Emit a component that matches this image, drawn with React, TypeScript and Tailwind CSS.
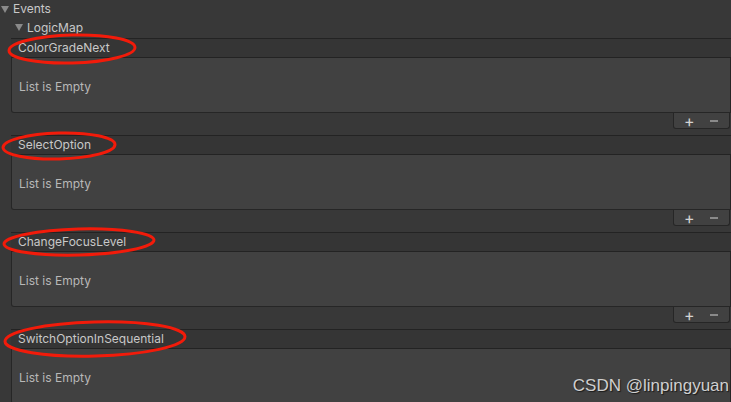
import React from 'react';

const EVENTS = ['ColorGradeNext', 'SelectOption', 'ChangeFocusLevel', 'SwitchOptionInSequential'];

// red marker ellipses drawn on top of the inspector
const MARKS = [
  { cx: 72, cy: 49, rx: 63, ry: 14 },
  { cx: 59, cy: 146, rx: 56, ry: 13 },
  { cx: 79, cy: 242, rx: 75, ry: 13 },
  { cx: 95, cy: 339, rx: 90, ry: 17 },
];

function Caret() {
  return (
    <svg width="8" height="7" viewBox="0 0 8 7" className="shrink-0">
      <path d="M0 0h8L4 7z" fill="#8a8a8a" />
    </svg>
  );
}

function EventList({ name, last }: { name: string; last: boolean }) {
  return (
    <div className="mb-[6px]">
      <div className="flex h-[20px] items-center border-y border-[#232323] bg-[#353535] pl-[7px] text-[12px] text-[#c8c8c8]">
        {name}
      </div>
      <div className="flex h-[55px] items-center rounded-bl-[3px] border-x border-b border-[#262626] bg-[#414141] pl-[7px] pt-[3px] text-[12px] text-[#b8b8b8]">
        List is Empty
      </div>
      {!last && (
        <div className="flex justify-end">
          <div className="mr-[1px] flex h-[16px] w-[57px] items-center rounded-b-[3px] border-x border-b border-[#262626] bg-[#414141]">
            <span className="ml-[10px] text-[16px] leading-none text-[#d4d4d4]">+</span>
            <span className="ml-[15px] h-[2px] w-[8px] bg-[#8a8a8a]" />
          </div>
        </div>
      )}
    </div>
  );
}

export default function App() {
  return (
    <div className="relative h-[402px] w-[731px] overflow-hidden bg-[#383838] font-['Inter',sans-serif]">
      <div className="flex h-[18px] items-center gap-[4px] pl-[1px] text-[12px] text-[#c8c8c8]">
        <Caret />
        Events
      </div>
      <div className="flex h-[19px] items-center gap-[4px] pl-[15px] text-[12px] text-[#c8c8c8]">
        <Caret />
        LogicMap
      </div>
      <div className="mt-[1px] pl-[11px]">
        {EVENTS.map((e, i) => (
          <EventList key={e} name={e} last={i === EVENTS.length - 1} />
        ))}
      </div>

      <svg className="pointer-events-none absolute left-0 top-0" width="731" height="402">
        {MARKS.map((m, i) => (
          <ellipse
            key={i}
            cx={m.cx}
            cy={m.cy}
            rx={m.rx}
            ry={m.ry}
            fill="none"
            stroke="#f21b0a"
            strokeWidth="3"
            transform={`rotate(-1.5 ${m.cx} ${m.cy})`}
          />
        ))}
      </svg>

      <div className="absolute bottom-[8px] right-[2px] font-['Liberation_Sans',sans-serif] text-[17px] leading-none text-[#cfcfcf] [text-shadow:1px_1px_1px_#1a1a1a]">
        CSDN @linpingyuan
      </div>
    </div>
  );
}
